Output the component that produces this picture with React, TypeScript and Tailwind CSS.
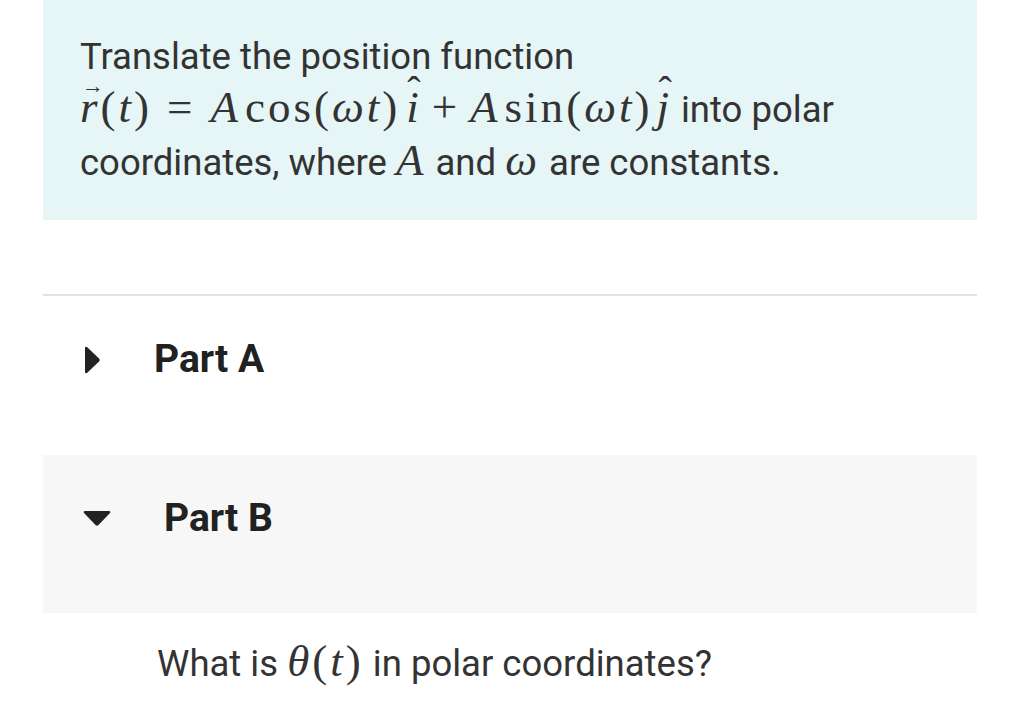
import { ReactNode } from 'react'

const serif = "font-['Liberation_Serif','Times_New_Roman',serif]"

function M({ children }: { children: ReactNode }) {
  return (
    <span className={`${serif} text-[45px] leading-none tracking-[3px] whitespace-nowrap`}>{children}</span>
  )
}

function I({ children }: { children: ReactNode }) {
  return <span className="italic">{children}</span>
}

function Accent({ base, mark, markClass }: { base: string; mark: string; markClass: string }) {
  return (
    <span className="relative inline-block italic">
      {base}
      <span className={`absolute not-italic leading-none tracking-normal ${markClass}`}>{mark}</span>
    </span>
  )
}

function Caret({ open }: { open: boolean }) {
  if (open) {
    return (
      <svg width="30" height="18" viewBox="0 0 30 18" className="shrink-0">
        <path d="M3 2 L27 2 Q29 2 28 4 L16.5 16 Q15 17.5 13.5 16 L2 4 Q1 2 3 2 Z" fill="#222" />
      </svg>
    )
  }
  return (
    <svg width="17" height="30" viewBox="0 0 17 30" className="shrink-0">
      <path d="M2 3 Q2 1 4 2 L16 13.5 Q17.5 15 16 16.5 L4 28 Q2 29 2 27 Z" fill="#222" />
    </svg>
  )
}

export default function App() {
  return (
    <div className="min-h-[705px] bg-white font-['Roboto',sans-serif] text-[#333]">
      <div className="mx-[43px] w-[934px]">
        {/* Question stem */}
        <div className="bg-[#e6f5f6] pl-[37px] pr-6 pt-[30px] pb-[31px] text-[36.5px] leading-[53px]">
          <div>Translate the position function</div>
          <div className="whitespace-nowrap">
            <M>
              <Accent base="r" mark="→" markClass="left-[2px] -top-[10px] text-[22px]" />
              (<I>t</I>)<span className="mx-[15px]">=</span>
              <I>A</I>
              <span className="ml-[4px]">cos</span>(<I>ωt</I>)
              <span className="ml-[6px]">
                <Accent base="i" mark="ˆ" markClass="left-[1px] -top-[14px] text-[40px]" />
              </span>
              <span className="mx-[10px]">+</span>
              <I>A</I>
              <span className="ml-[4px]">sin</span>(<I>ωt</I>)
              <span className="ml-[4px]">
                <Accent base="j" mark="ˆ" markClass="left-[2px] -top-[14px] text-[40px]" />
              </span>
            </M>{' '}
            into polar
          </div>
          <div>
            coordinates, where{' '}
            <M>
              <I>A</I>
            </M>{' '}
            and{' '}
            <M>
              <I>ω</I>
            </M>{' '}
            are constants.
          </div>
        </div>

        <div className="h-[74px]" />
        <div className="h-[2px] bg-[#e2e2e2]" />

        {/* Part A */}
        <div className="flex h-[159px] items-center gap-[54px] pb-[32px] pl-[40px]">
          <Caret open={false} />
          <span className="text-[39px] font-bold text-[#212121]">Part A</span>
        </div>

        {/* Part B */}
        <div className="flex h-[158px] items-center gap-[52px] bg-[#f7f7f7] pb-[32px] pl-[39px]">
          <Caret open={true} />
          <span className="text-[39px] font-bold text-[#212121]">Part B</span>
        </div>

        <div className="pl-[114px] pt-[24px] text-[36.5px] leading-[53px]">
          What is{' '}
          <M>
            <I>θ</I>(<I>t</I>)
          </M>{' '}
          in polar coordinates?
        </div>
      </div>
    </div>
  )
}
